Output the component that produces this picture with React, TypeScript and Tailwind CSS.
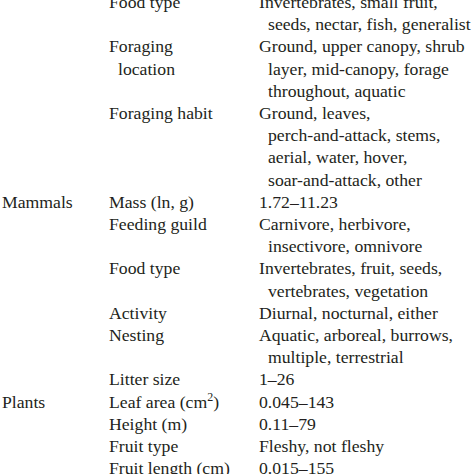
type Row = {
  group?: string;
  trait: string[];
  values: string[];
  sup?: boolean;
};

const rows: Row[] = [
  { trait: ['Food type'], values: ['Invertebrates, small fruit,', 'seeds, nectar, fish, generalist'] },
  { trait: ['Foraging', 'location'], values: ['Ground, upper canopy, shrub', 'layer, mid-canopy, forage', 'throughout, aquatic'] },
  {
    trait: ['Foraging habit'],
    values: ['Ground, leaves,', 'perch-and-attack, stems,', 'aerial, water, hover,', 'soar-and-attack, other'],
  },
  { group: 'Mammals', trait: ['Mass (ln, g)'], values: ['1.72–11.23'] },
  { trait: ['Feeding guild'], values: ['Carnivore, herbivore,', 'insectivore, omnivore'] },
  { trait: ['Food type'], values: ['Invertebrates, fruit, seeds,', 'vertebrates, vegetation'] },
  { trait: ['Activity'], values: ['Diurnal, nocturnal, either'] },
  { trait: ['Nesting'], values: ['Aquatic, arboreal, burrows,', 'multiple, terrestrial'] },
  { trait: ['Litter size'], values: ['1–26'] },
  { group: 'Plants', trait: ['Leaf area (cm'], values: ['0.045–143'], sup: true },
  { trait: ['Height (m)'], values: ['0.11–79'] },
  { trait: ['Fruit type'], values: ['Fleshy, not fleshy'] },
  { trait: ['Fruit length (cm)'], values: ['0.015–155'] },
];

function Lines({ lines, sup }: { lines: string[]; sup?: boolean }) {
  return (
    <div>
      {lines.map((line, i) => (
        <div key={i} className={i > 0 ? 'pl-[9px]' : ''}>
          {line}
          {sup && i === 0 && (
            <>
              <sup className="text-[12px] leading-none relative -top-[7px]">2</sup>)
            </>
          )}
        </div>
      ))}
    </div>
  );
}

export default function App() {
  return (
    <div className="w-[474px] h-[474px] overflow-hidden bg-white">
      <div
        className="-mt-[9px] text-[17.7px] leading-[22.2px] text-[#231f20] whitespace-nowrap"
        style={{ fontFamily: '"Liberation Serif", "Times New Roman", serif' }}
      >
        {rows.map((row, i) => (
          <div key={i} className="grid grid-cols-[109px_150px_1fr]">
            <div className="pl-[2px]">{row.group ?? ''}</div>
            <Lines lines={row.trait} sup={row.sup} />
            <Lines lines={row.values} />
          </div>
        ))}
      </div>
    </div>
  );
}
